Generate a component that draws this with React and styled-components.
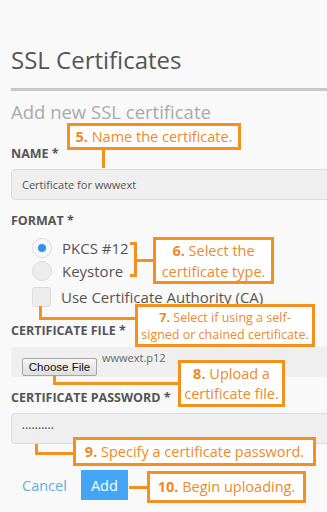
import styled, { createGlobalStyle } from "styled-components";

const GlobalStyle = createGlobalStyle`
  html, body {
    margin: 0;
    padding: 0;
    overflow: hidden;
    background: #f9f9f9;
  }
`;

const ORANGE = "#f5901e";
const ORANGE_TEXT = "#ee8a2a";

const Page = styled.div`
  position: relative;
  width: 327px;
  height: 512px;
  overflow: hidden;
  background-color: #f9f9f9;
  font-family: "Open Sans", "Liberation Sans", sans-serif;
  color: #555;
`;

const Form = styled.div`
  width: 340px;
  padding: 44px 0 0 11px;
  display: flex;
  flex-direction: column;
`;

const Title = styled.h1`
  margin: 0;
  font-size: 24px;
  line-height: 32px;
  font-weight: 400;
  color: #555;
`;

const Divider = styled.div`
  margin-top: 12px;
  height: 3px;
  background-color: #c8c8c8;
`;

const Subtitle = styled.h2`
  margin: 9px 0 0;
  font-size: 18.5px;
  line-height: 24px;
  font-weight: 400;
  color: #aaa;
`;

const Label = styled.div`
  margin-top: ${(p) => p.$gap}px;
  font-size: 12.5px;
  line-height: 16px;
  font-weight: 700;
  color: #555;
  text-transform: uppercase;
`;

const Field = styled.div`
  margin-top: 7px;
  height: 31px;
  box-sizing: border-box;
  padding-left: 10px;
  display: flex;
  align-items: center;
  background-color: #efefef;
  border: 1px solid #dcdcdc;
  border-radius: 4px;
  font-size: 11px;
  color: #555;
`;

const Dots = styled.span`
  font-size: 7px;
  letter-spacing: 0.6px;
  color: #555;
`;

const Options = styled.div`
  margin-top: 7px;
  padding-left: 21px;
  display: flex;
  flex-direction: column;
`;

const OptionRow = styled.div`
  height: ${(p) => p.$h}px;
  margin-top: ${(p) => p.$gap || 0}px;
  display: flex;
  align-items: center;
  gap: 10px;
  font-size: 15px;
  color: #555;
`;

const Radio = styled.span`
  width: 20px;
  height: 20px;
  box-sizing: border-box;
  border-radius: 50%;
  border: 1px solid #dcdcdc;
  background: ${(p) => (p.$on ? "#f7f7f7" : "#ececec")};
  display: flex;
  align-items: center;
  justify-content: center;

  &::after {
    content: "";
    display: ${(p) => (p.$on ? "block" : "none")};
    width: 8px;
    height: 8px;
    border-radius: 50%;
    background-color: #2b95ee;
  }
`;

const Checkbox = styled.span`
  width: 19px;
  height: 20px;
  box-sizing: border-box;
  border: 1px solid #dcdcdc;
  border-radius: 3px;
  background-color: #ececec;
`;

const FileBox = styled.div`
  margin-top: 8px;
  height: 30px;
  padding-left: 11px;
  display: flex;
  align-items: flex-start;
  gap: 5px;
  background-color: #efefef;
  border-radius: 4px;
`;

const FileButton = styled.span`
  margin-top: 11px;
  width: 75px;
  height: 18px;
  box-sizing: border-box;
  display: flex;
  align-items: center;
  justify-content: center;
  border: 1px solid #a6a6a6;
  border-radius: 2px;
  background: linear-gradient(#f6f6f6, #dedede);
  font-family: "Liberation Sans", Arial, sans-serif;
  font-size: 11.5px;
  color: #111;
`;

const FileName = styled.span`
  margin-top: 3px;
  font-size: 11px;
  color: #666;
`;

const Actions = styled.div`
  margin-top: 26px;
  padding-left: 11px;
  display: flex;
  align-items: center;
  gap: 14px;
`;

const CancelLink = styled.span`
  font-size: 14.5px;
  color: #62ade6;
`;

const AddButton = styled.span`
  width: 47px;
  height: 30px;
  display: flex;
  align-items: center;
  justify-content: center;
  background-color: #42a5f5;
  color: #fff;
  font-size: 14.5px;
`;

const Callout = styled.div`
  position: absolute;
  left: ${(p) => p.$x}px;
  top: ${(p) => p.$y}px;
  width: ${(p) => p.$w}px;
  height: ${(p) => p.$h}px;
  box-sizing: border-box;
  border: 3px solid ${ORANGE};
  background-color: #fff;
  display: flex;
  flex-direction: column;
  align-items: center;
  justify-content: center;
  text-align: center;
  font-size: ${(p) => p.$size || 14.5}px;
  line-height: ${(p) => p.$lh || 20}px;
  color: ${ORANGE_TEXT};
  white-space: nowrap;

  b {
    font-weight: 700;
  }
`;

const Wire = styled.div`
  position: absolute;
  left: ${(p) => p.$x}px;
  top: ${(p) => p.$y}px;
  width: ${(p) => p.$w}px;
  height: ${(p) => p.$h}px;
  background-color: ${ORANGE};
`;

export default function App() {
  return (
    <Page>
      <GlobalStyle />
      <Form>
        <Title>SSL Certificates</Title>
        <Divider />
        <Subtitle>Add new SSL certificate</Subtitle>

        <Label $gap={22}>Name *</Label>
        <Field>Certificate for wwwext</Field>

        <Label $gap={13}>Format *</Label>
        <Options>
          <OptionRow $h={23}>
            <Radio $on />
            PKCS #12
          </OptionRow>
          <OptionRow $h={23}>
            <Radio />
            Keystore
          </OptionRow>
          <OptionRow $h={20} $gap={5}>
            <Checkbox />
            Use Certificate Authority (CA)
          </OptionRow>
        </Options>

        <Label $gap={16}>Certificate File *</Label>
        <FileBox>
          <FileButton>Choose File</FileButton>
          <FileName>wwwext.p12</FileName>
        </FileBox>

        <Label $gap={13}>Certificate Password *</Label>
        <Field>
          <Dots>••••••••••</Dots>
        </Field>

        <Actions>
          <CancelLink>Cancel</CancelLink>
          <AddButton>Add</AddButton>
        </Actions>
      </Form>

      <Wire $x={102} $y={148} $w={3} $h={20} />
      <Callout $x={67} $y={123} $w={174} $h={27}>
        <span><b>5.</b> Name the certificate.</span>
      </Callout>

      <Wire $x={130} $y={242} $w={7} $h={3} />
      <Wire $x={134} $y={242} $w={3} $h={35} />
      <Wire $x={130} $y={274} $w={7} $h={3} />
      <Wire $x={137} $y={259} $w={18} $h={3} />
      <Callout $x={153} $y={237} $w={121} $h={47} $lh={21}>
        <span><b>6.</b> Select the</span>
        <span>certificate type.</span>
      </Callout>

      <Wire $x={39} $y={306} $w={3} $h={14} />
      <Wire $x={39} $y={317} $w={98} $h={3} />
      <Callout $x={135} $y={304} $w={180} $h={43} $size={12.5} $lh={17}>
        <span><b>7.</b> Select if using a self-</span>
        <span>signed or chained certificate.</span>
      </Callout>

      <Wire $x={53} $y={375} $w={3} $h={10} />
      <Wire $x={53} $y={382} $w={127} $h={3} />
      <Callout $x={178} $y={360} $w={107} $h={47} $lh={20}>
        <span><b>8.</b> Upload a</span>
        <span>certificate file.</span>
      </Callout>

      <Wire $x={35} $y={444} $w={3} $h={11} />
      <Wire $x={35} $y={452} $w={40} $h={3} />
      <Callout $x={73} $y={437} $w={243} $h={29}>
        <span><b>9.</b> Specify a certificate password.</span>
      </Callout>

      <Wire $x={129} $y={486} $w={20} $h={3} />
      <Callout $x={147} $y={471} $w={159} $h={32}>
        <span><b>10.</b> Begin uploading.</span>
      </Callout>
    </Page>
  );
}
